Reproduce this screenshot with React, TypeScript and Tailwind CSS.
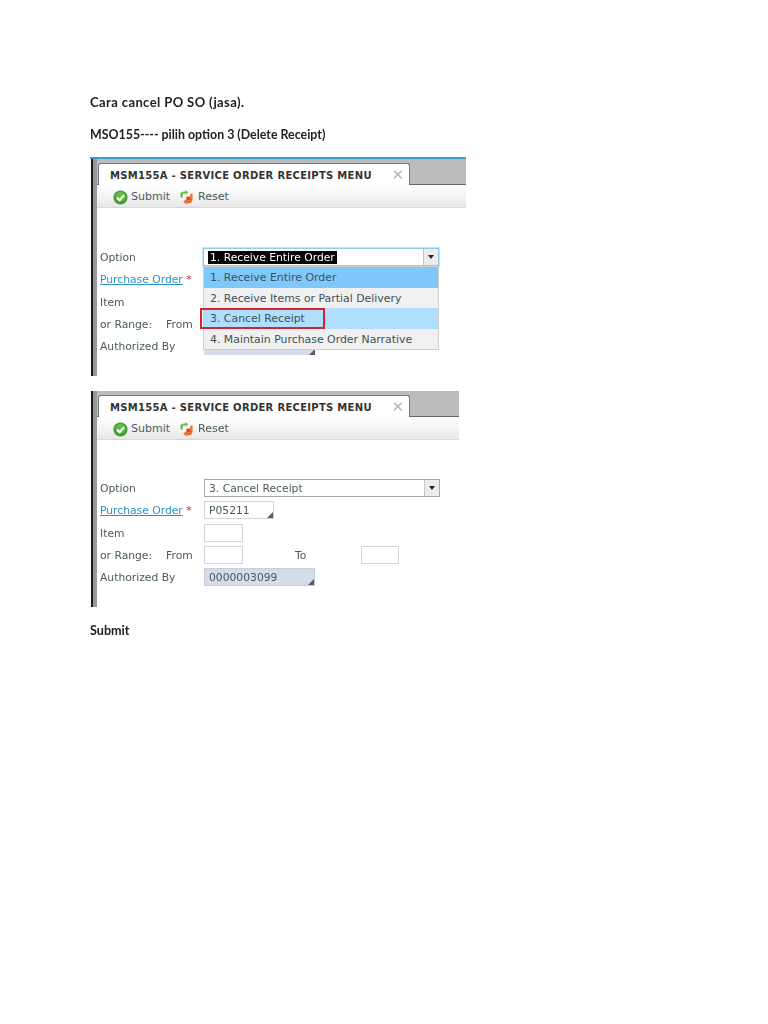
import React from 'react';

const OPTIONS = [
  { label: '1. Receive Entire Order', bg: 'bg-[#7fc8fc]' },
  { label: '2. Receive Items or Partial Delivery', bg: 'bg-[#f0f0f0]' },
  { label: '3. Cancel Receipt', bg: 'bg-[#afdefe]' },
  { label: '4. Maintain Purchase Order Narrative', bg: 'bg-[#f0f0f0]' },
];

const CheckIcon = () => (
  <svg width="15" height="15" viewBox="0 0 16 16">
    <circle cx="8" cy="8" r="7.5" fill="#3f9a2c" />
    <circle cx="8" cy="7" r="5.5" fill="#62bb46" />
    <path d="M4.3 8.2 7 11l4.8-5.6" fill="none" stroke="#fff" strokeWidth="2.2" />
  </svg>
);

const ResetIcon = () => (
  <svg width="15" height="15" viewBox="0 0 16 16">
    <path d="M1.500 8V4.500C1.500 2.500 3 1.500 5 1.500H7V0L10 2.500 7 5V3.800H5.500C4.500 3.800 4 4.400 4 5.500V8Z" fill="#6cbf4b" />
    <path d="M14.500 4v6c0 2.500-1.800 4-4 4H8v1.500L4.500 12.500 8 9.500V11h2c1.200 0 2-.7 2-2V4Z" fill="#e8702a" />
    <rect x="8" y="7" width="4" height="4" fill="#d9472b" />
  </svg>
);

// little dark triangle in the lower right corner of the lookup fields
const Corner = () => (
  <span className="absolute right-0 bottom-0 w-0 h-0 border-l-[6px] border-l-transparent border-b-[6px] border-b-[#555b6b]" />
);

const Label = ({ children }: { children: React.ReactNode }) => (
  <div className="w-[104px] h-[18px] shrink-0 leading-[20px] whitespace-nowrap">{children}</div>
);

const RangeLabel = () => (
  <Label>
    or Range:<span className="ml-[14px]">From</span>
  </Label>
);

const TextBox = ({ className = '' }: { className?: string }) => (
  <div className={`h-[18px] bg-white border border-[#d4d4d4] ${className}`} />
);

const SelectBox = ({ glow, children }: { glow?: boolean; children: React.ReactNode }) => (
  <div
    className={`w-[236px] h-[18px] bg-white flex items-center border ${
      glow ? '-ml-px border-[#8fcbee] outline outline-[#c5e4f6]' : 'border-[#a8a8a8]'
    }`}
  >
    <div className="flex-1 pl-[4px] leading-[15px]">{children}</div>
    <div className="w-[15px] h-full bg-[#ececec] border-l border-[#c4c4c4] flex items-center justify-center">
      <span className="w-0 h-0 border-x-[3.500px] border-x-transparent border-t-[4px] border-t-[#222]" />
    </div>
  </div>
);

const Chrome = ({
  blue,
  width,
  height,
  children,
}: {
  blue?: boolean;
  width: string;
  height: string;
  children: React.ReactNode;
}) => (
  <div className={`ml-[90px] flex flex-col overflow-hidden blur-[0.35px] ${width} ${height}`}>
    {blue && <div className="h-[2px] bg-[#3b9cc4] shrink-0" />}
    <div className="flex flex-1 min-h-0">
      <div className="ml-[1px] w-[2px] bg-[#1c1c1c] shrink-0" />
      <div className="w-[4px] bg-[#9a9a9a] shrink-0" />
      <div className="flex-1 min-w-0 flex flex-col font-['DejaVu_Sans',sans-serif] text-[10.750px] text-[#4a5a5a]">
        <div className="h-[26px] shrink-0 bg-[#bcbcbc] border-b border-[#666] flex items-end pl-[1px]">
          <div className="w-[312px] h-[22px] -mb-px pt-[1px] bg-white border border-b-0 border-[#777] rounded-t-[3px] flex items-center pl-[11px]">
            <span className="font-bold text-[10px] tracking-[0.3px] text-[#333] whitespace-nowrap">
              MSM155A - SERVICE ORDER RECEIPTS MENU
            </span>
            <span className="ml-auto mr-[5px] text-[#b8b8b8] text-[15px] leading-none">✕</span>
          </div>
        </div>
        <div className="h-[23px] shrink-0 pt-[2px] bg-gradient-to-b from-white to-[#e9e9e9] border-b border-[#d8d8d8] flex items-center pl-[16px] text-[11px]">
          <CheckIcon />
          <span className="ml-[3px]">Submit</span>
          <span className="ml-[9px] flex items-center">
            <ResetIcon />
            <span className="ml-[4px]">Reset</span>
          </span>
        </div>
        {children}
      </div>
    </div>
  </div>
);

const LinkLabel = () => (
  <Label>
    <span className="text-[#2a93c4] underline">Purchase Order</span> <span className="text-[#d8232a]">*</span>
  </Label>
);

const FirstScreen = () => (
  <Chrome blue width="w-[376px]" height="h-[219px]">
    <div className="relative flex flex-col gap-[4.250px] pt-[40px] pl-[3px]">
      <div className="flex">
        <Label>Option</Label>
        <SelectBox glow>
          <span className="bg-black text-white px-[2px]">1. Receive Entire Order</span>
        </SelectBox>
      </div>
      <div className="flex">
        <LinkLabel />
      </div>
      <div className="flex">
        <Label>Item</Label>
      </div>
      <div className="flex">
        <RangeLabel />
      </div>
      <div className="flex">
        <Label>Authorized By</Label>
        <div className="relative w-[111px] h-[18px] bg-[#d6dbe8] pl-[4px] leading-[18px]">
          <Corner />
        </div>
      </div>
      <div className="absolute left-[106px] top-[58px] w-[236px] border border-[#cfcfcf] text-[10.900px] text-[#3f5156]">
        {OPTIONS.map((o) => (
          <div key={o.label} className={`h-[20.500px] pl-[6px] leading-[21px] ${o.bg}`}>
            {o.label}
          </div>
        ))}
      </div>
      <div className="absolute left-[103px] top-[100px] w-[125px] h-[21px] border-2 border-[#d5232f]" />
    </div>
  </Chrome>
);

const SecondScreen = () => (
  <Chrome width="w-[369px]" height="h-[216px]">
    <div className="flex flex-col gap-[4.250px] pt-[39px] pl-[3px]">
      <div className="flex">
        <Label>Option</Label>
        <SelectBox>3. Cancel Receipt</SelectBox>
      </div>
      <div className="flex">
        <LinkLabel />
        <div className="relative w-[70px] h-[18px] bg-white border border-[#d4d4d4] pl-[4px] leading-[18px]">
          P05211
          <Corner />
        </div>
      </div>
      <div className="flex">
        <Label>Item</Label>
        <TextBox className="w-[39px]" />
      </div>
      <div className="flex">
        <RangeLabel />
        <TextBox className="w-[39px]" />
        <div className="ml-[52px] w-[66px] h-[18px] leading-[20px]">To</div>
        <TextBox className="w-[38px]" />
      </div>
      <div className="flex">
        <Label>Authorized By</Label>
        <div className="relative w-[111px] h-[18px] bg-[#d6dbe8] border border-[#c8cddb] pl-[4px] leading-[18px]">
          0000003099
          <Corner />
        </div>
      </div>
    </div>
  </Chrome>
);

const Heading = ({ className, children }: { className: string; children: React.ReactNode }) => (
  <p className={`pl-[90px] h-[20px] leading-[20px] font-bold text-[#222] blur-[0.25px] ${className}`}>{children}</p>
);

export default function App() {
  return (
    <div className="w-[768px] h-[1024px] bg-white overflow-hidden pt-[92px] font-['Lato',sans-serif]">
      <Heading className="text-[13px] tracking-[0.4px]">Cara cancel PO SO (jasa).</Heading>
      <Heading className="mt-[13px] mb-[12px] text-[12.400px]">MSO155---- pilih option 3 (Delete Receipt)</Heading>
      <FirstScreen />
      <div className="h-[15px]" />
      <SecondScreen />
      <Heading className="mt-[14px] text-[12.600px]">Submit</Heading>
    </div>
  );
}
